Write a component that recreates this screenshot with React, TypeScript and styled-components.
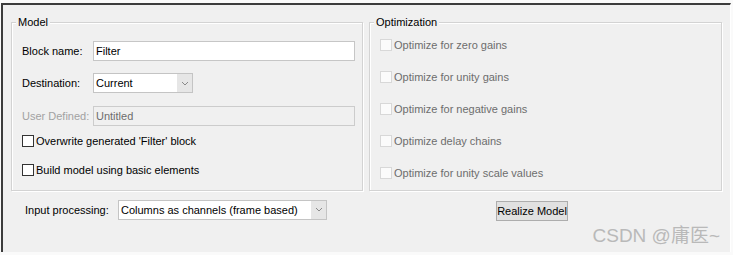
import styled, { createGlobalStyle } from 'styled-components'

const GlobalStyle = createGlobalStyle`
  body {
    margin: 0;
    background: #fafafa;
    font-family: 'Liberation Sans', Arial, sans-serif;
    font-size: 11px;
  }
`

const Page = styled.div`
  position: relative;
  width: 733px;
  height: 255px;
  padding: 3px 2px 0 1px;
  box-sizing: border-box;
  overflow: hidden;
`

const Window = styled.div`
  height: 249px;
  box-sizing: border-box;
  background: #f0f0f0;
  border-top: 2px solid #3c3c3c;
  border-left: 2px solid #3c3c3c;
  border-right: 1px solid #ffffff;
  padding: 17px 0 0 8px;
`

const Columns = styled.div`
  display: grid;
  grid-template-columns: 352px 353px;
  column-gap: 6px;
`

const Group = styled.div`
  position: relative;
  height: 169px;
  box-sizing: border-box;
  border: 1px solid #d3d3d3;
  box-shadow: inset 1px 1px 0 #ffffff, 1px 1px 0 #ffffff;
  padding: ${({ $top }: { $top: number }) => $top}px 0 0 10px;
  display: flex;
  flex-direction: column;
`

const Legend = styled.span`
  position: absolute;
  top: -8px;
  left: 4px;
  padding: 0 2px;
  background: #f0f0f0;
  color: #000;
  font-size: 11px;
  line-height: 14px;
`

const FieldRow = styled.div<{ $gap?: number }>`
  display: flex;
  align-items: center;
  height: 20px;
  margin-top: ${({ $gap }) => $gap ?? 0}px;
`

const FieldLabel = styled.span<{ $disabled?: boolean; $width?: number }>`
  width: ${({ $width }) => $width ?? 71}px;
  flex: none;
  color: ${({ $disabled }) => ($disabled ? '#a2a2a2' : '#000')};
`

const TextBox = styled.div<{ $disabled?: boolean }>`
  width: 262px;
  height: 20px;
  box-sizing: border-box;
  display: flex;
  align-items: center;
  padding-left: 2px;
  background: ${({ $disabled }) => ($disabled ? '#f0f0f0' : '#ffffff')};
  border: 1px solid ${({ $disabled }) => ($disabled ? '#cccccc' : '#c6c6c6')};
  color: ${({ $disabled }) => ($disabled ? '#6d6d6d' : '#000')};
`

const Dropdown = styled.div<{ $width: number }>`
  width: ${({ $width }) => $width}px;
  height: 20px;
  box-sizing: border-box;
  display: flex;
  background: #ffffff;
  border: 1px solid #c4c4c4;
`

const DropValue = styled.span`
  flex: 1;
  display: flex;
  align-items: center;
  padding-left: 2px;
  color: #000;
`

const DropArrow = styled.span`
  width: 15px;
  display: flex;
  align-items: center;
  justify-content: center;
  background: #e6e6e6;
`

const CheckRow = styled.div<{ $gap?: number }>`
  display: flex;
  align-items: center;
  gap: 2px;
  height: 20px;
  margin-top: ${({ $gap }) => $gap ?? 0}px;
`

const Box = styled.span<{ $disabled?: boolean }>`
  width: 12px;
  height: 12px;
  box-sizing: border-box;
  flex: none;
  background: ${({ $disabled }) => ($disabled ? '#fbfbfb' : '#ffffff')};
  border: 1px solid ${({ $disabled }) => ($disabled ? '#d8d8d8' : '#333333')};
`

const CheckText = styled.span<{ $disabled?: boolean }>`
  color: ${({ $disabled }) => ($disabled ? '#6d6d6d' : '#000')};
`

const BottomRow = styled.div`
  display: grid;
  grid-template-columns: 352px 353px;
  column-gap: 6px;
  margin-top: 7px;
`

const InputProcessing = styled.div`
  display: flex;
  align-items: center;
  padding-left: 14px;
`

const ButtonCell = styled.div`
  padding: 3px 0 0 127px;
`

const Button = styled.button`
  width: 72px;
  height: 20px;
  padding: 0;
  background: #e1e1e1;
  border: 1px solid #adadad;
  font-family: 'Liberation Sans', Arial, sans-serif;
  font-size: 11px;
  color: #000;
`

const Watermark = styled.span`
  position: absolute;
  right: 13px;
  top: 224px;
  font-family: 'Liberation Sans', 'Noto Sans CJK SC', sans-serif;
  font-size: 19px;
  line-height: 24px;
  color: #b9b9b9;
`

const Chevron = () => (
  <svg width="8" height="5" viewBox="0 0 8 5">
    <path d="M1 1 L4 4 L7 1" fill="none" stroke="#8a8a8a" strokeWidth="1" />
  </svg>
)

const optimizations = [
  'Optimize for zero gains',
  'Optimize for unity gains',
  'Optimize for negative gains',
  'Optimize delay chains',
  'Optimize for unity scale values',
]

const App = () => {
  return (
    <Page>
      <GlobalStyle />
      <Window>
        <Columns>
          <Group $top={18}>
            <Legend>Model</Legend>
            <FieldRow>
              <FieldLabel>Block name:</FieldLabel>
              <TextBox>Filter</TextBox>
            </FieldRow>
            <FieldRow $gap={12}>
              <FieldLabel>Destination:</FieldLabel>
              <Dropdown $width={100}>
                <DropValue>Current</DropValue>
                <DropArrow><Chevron /></DropArrow>
              </Dropdown>
            </FieldRow>
            <FieldRow $gap={13}>
              <FieldLabel $disabled>User Defined:</FieldLabel>
              <TextBox $disabled>Untitled</TextBox>
            </FieldRow>
            <CheckRow $gap={5}>
              <Box />
              <CheckText>Overwrite generated 'Filter' block</CheckText>
            </CheckRow>
            <CheckRow $gap={9}>
              <Box />
              <CheckText>Build model using basic elements</CheckText>
            </CheckRow>
          </Group>
          <Group $top={12}>
            <Legend>Optimization</Legend>
            {optimizations.map((label, i) => (
              <CheckRow key={label} $gap={i === 0 ? 0 : 12}>
                <Box $disabled />
                <CheckText $disabled>{label}</CheckText>
              </CheckRow>
            ))}
          </Group>
        </Columns>
        <BottomRow>
          <InputProcessing>
            <FieldLabel $width={93}>Input processing:</FieldLabel>
            <Dropdown $width={209}>
              <DropValue>Columns as channels (frame based)</DropValue>
              <DropArrow><Chevron /></DropArrow>
            </Dropdown>
          </InputProcessing>
          <ButtonCell>
            <Button>Realize Model</Button>
          </ButtonCell>
        </BottomRow>
      </Window>
      <Watermark>CSDN @庸医~</Watermark>
    </Page>
  )
}

export default App
